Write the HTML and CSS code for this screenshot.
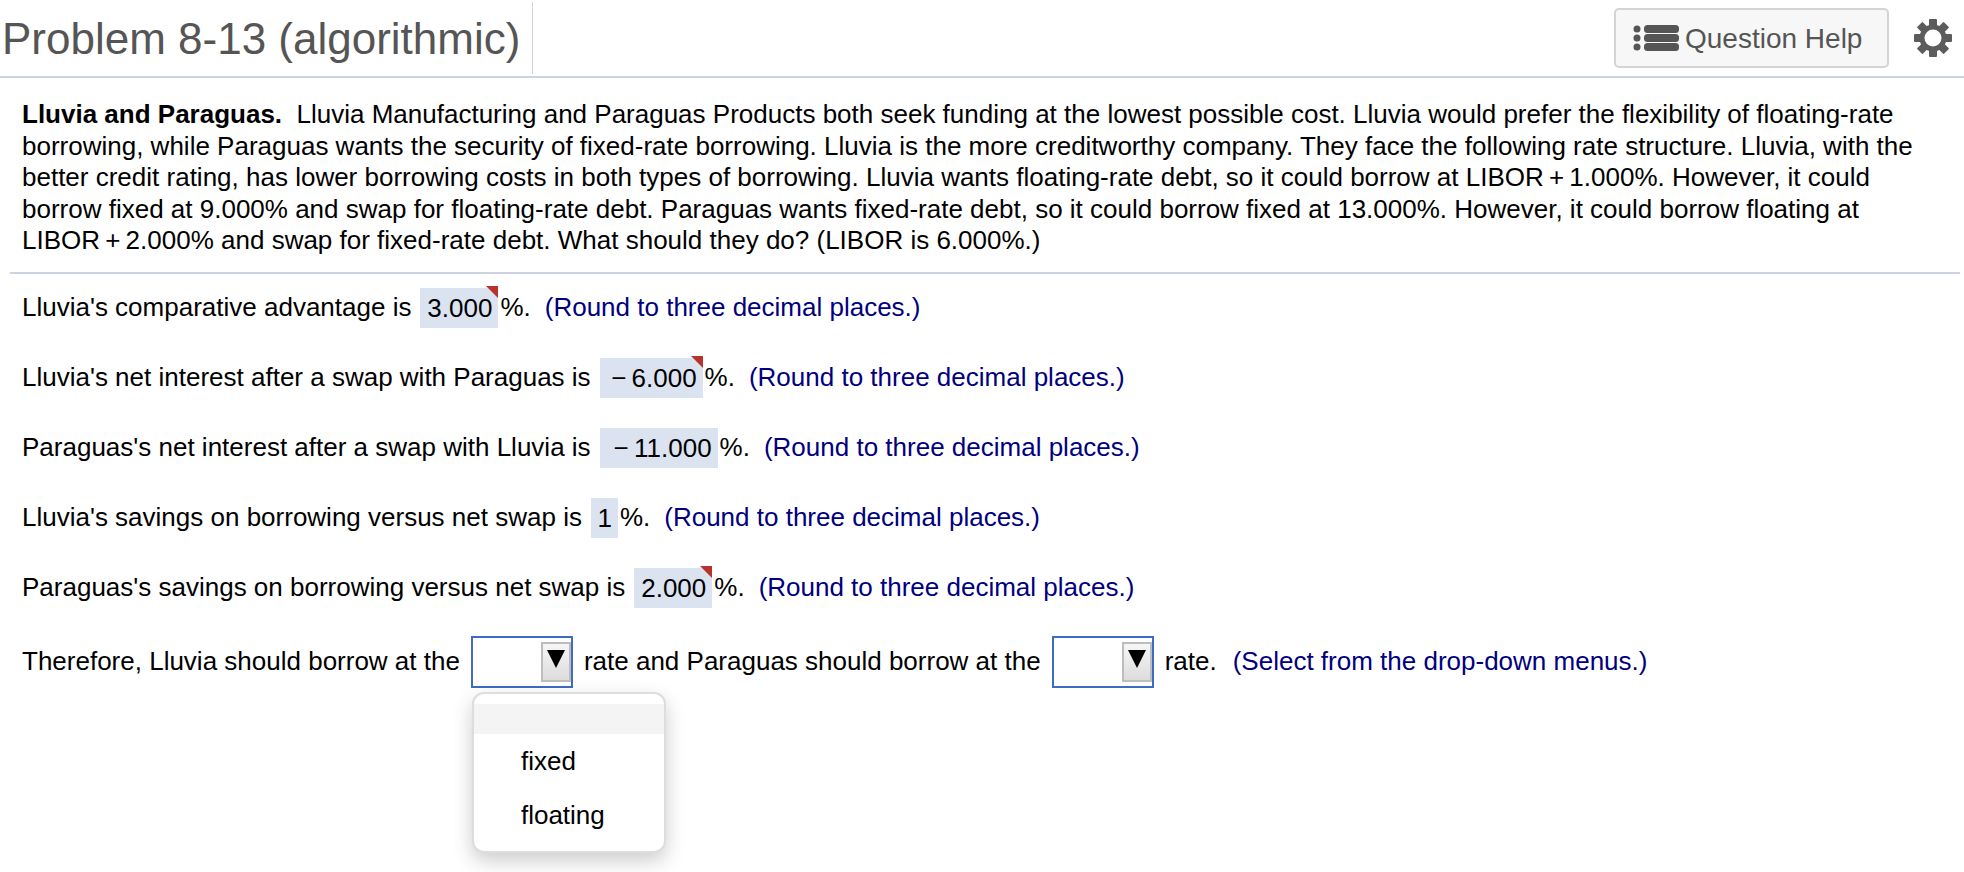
FILE: index.html
```html
<!DOCTYPE html>
<html lang="en">
<head>
    <meta charset="UTF-8">
    <meta name="viewport" content="width=device-width, initial-scale=1.0">
    <title>Problem 8-13 (algorithmic)</title>
    <link rel="stylesheet" href="styles.css">
</head>
<body>
    <div class="header">
        <h1 class="title">Problem 8-13 (algorithmic)</h1>
        <button class="btn-help">
            <svg class="icon-list" viewBox="0 0 46 26" width="46" height="26">
                <circle cx="4" cy="4" r="3.500"/>
                <circle cx="4" cy="13" r="3.500"/>
                <circle cx="4" cy="22" r="3.500"/>
                <rect x="11" y="0" width="35" height="8" rx="3.500"/>
                <rect x="11" y="9" width="35" height="8" rx="3.500"/>
                <rect x="11" y="18" width="35" height="8" rx="3.500"/>
            </svg>
            <span class="btn-label">Question Help</span>
        </button>
        <svg class="icon-gear" viewBox="0 0 40 40" width="40" height="40">
            <g fill="#5c5c5c">
                <rect x="16" y="1" width="8" height="38" rx="1"/>
                <rect x="16" y="1" width="8" height="38" rx="1" transform="rotate(45 20 20)"/>
                <rect x="16" y="1" width="8" height="38" rx="1" transform="rotate(90 20 20)"/>
                <rect x="16" y="1" width="8" height="38" rx="1" transform="rotate(135 20 20)"/>
                <circle cx="20" cy="20" r="13.500"/>
            </g>
            <circle cx="20" cy="20" r="8.500" fill="#fff"/>
        </svg>
    </div>

    <div class="problem">
        <p class="statement"><b>Lluvia and Paraguas.</b>&nbsp; Lluvia Manufacturing and Paraguas Products both seek funding at the lowest possible cost. Lluvia would prefer the flexibility of floating-rate<br>borrowing, while Paraguas wants the security of fixed-rate borrowing. Lluvia is the more creditworthy company. They face the following rate structure. Lluvia, with the<br>better credit rating, has lower borrowing costs in both types of borrowing. Lluvia wants floating-rate debt, so it could borrow at LIBOR&#8201;+&#8201;1.000%. However, it could<br>borrow fixed at 9.000% and swap for floating-rate debt. Paraguas wants fixed-rate debt, so it could borrow fixed at 13.000%. However, it could borrow floating at<br>LIBOR&#8201;+&#8201;2.000% and swap for fixed-rate debt. What should they do? (LIBOR is 6.000%.)</p>
    </div>

    <div class="answers">
        <div class="row">
            <span>Lluvia's comparative advantage is</span>
            <span class="answer wrong w-78">3.000</span>
            <span class="percent">%.</span>
            <span class="hint">(Round to three decimal places.)</span>
        </div>
        <div class="row">
            <span>Lluvia's net interest after a swap with Paraguas is</span>
            <span class="answer wrong w-103">&minus;&#8201;6.000</span>
            <span class="percent">%.</span>
            <span class="hint">(Round to three decimal places.)</span>
        </div>
        <div class="row">
            <span>Paraguas's net interest after a swap with Lluvia is</span>
            <span class="answer w-118">&minus;&#8201;11.000</span>
            <span class="percent">%.</span>
            <span class="hint">(Round to three decimal places.)</span>
        </div>
        <div class="row">
            <span>Lluvia's savings on borrowing versus net swap is</span>
            <span class="answer w-27">1</span>
            <span class="percent">%.</span>
            <span class="hint">(Round to three decimal places.)</span>
        </div>
        <div class="row">
            <span>Paraguas's savings on borrowing versus net swap is</span>
            <span class="answer wrong w-78">2.000</span>
            <span class="percent">%.</span>
            <span class="hint">(Round to three decimal places.)</span>
        </div>
        <div class="row row-select">
            <span>Therefore, Lluvia should borrow at the</span>
            <div class="dropdown">
                <span class="arrow-btn"><span class="arrow"></span></span>
                <ul class="menu">
                    <li class="blank"></li>
                    <li>fixed</li>
                    <li>floating</li>
                </ul>
            </div>
            <span>rate and Paraguas should borrow at the</span>
            <div class="dropdown">
                <span class="arrow-btn"><span class="arrow"></span></span>
            </div>
            <span>rate.</span>
            <span class="hint">(Select from the drop-down menus.)</span>
        </div>
    </div>
</body>
</html>
```

FILE: styles.css
```css
body {
    font-family: "Liberation Sans", Arial, sans-serif;
    font-size: 26px;
    color: #000;
    background-color: #fff;
    margin: 0;
    padding: 0;
    height: 872px;
    overflow: hidden;
}

.header {
    display: flex;
    align-items: center;
    height: 76px;
    border-bottom: 2px solid #cdd3e0;
}

.title {
    font-size: 44px;
    font-weight: normal;
    color: #555;
    margin: 0;
    padding-left: 2px;
    width: 533px;
    height: 72px;
    line-height: 74px;
    box-sizing: border-box;
    border-right: 1px solid #cdd3e0;
    white-space: nowrap;
}

.btn-help {
    display: flex;
    align-items: center;
    gap: 6px;
    margin-left: auto;
    width: 275px;
    height: 60px;
    padding: 0 0 0 17px;
    font-family: inherit;
    font-size: 28px;
    color: #555;
    background: #f7f7f7;
    border: 2px solid #d4d4d4;
    border-radius: 5px;
}

.btn-label {
    padding-top: 2px;
}

.icon-list {
    fill: #555;
}

.icon-gear {
    margin: 0 11px 0 24px;
}

.problem {
    padding: 21px 0 15px 22px;
}

.statement {
    margin: 0;
    line-height: 31.6px;
    white-space: nowrap;
}

.answers {
    margin-left: 10px;
    margin-right: 4px;
    padding: 14px 0 0 12px;
    border-top: 2px solid #cdd3e0;
}

.row {
    display: flex;
    align-items: center;
    height: 40px;
    margin-bottom: 30px;
    white-space: nowrap;
}

.row-select {
    height: 52px;
    margin-top: -2px;
}

.answer {
    position: relative;
    height: 40px;
    line-height: 40px;
    margin-left: 9px;
    box-sizing: border-box;
    padding-right: 6px;
    text-align: right;
    background-color: #dce3f0;
}

.w-78 { width: 78px; }
.w-103 { width: 103px; }
.w-118 { width: 118px; }
.w-27 { width: 27px; }

.wrong::after {
    content: "";
    position: absolute;
    top: -2px;
    right: 0;
    border-top: 12px solid #b8332c;
    border-left: 12px solid transparent;
}

.percent {
    margin-left: 2px;
}

.hint {
    color: #00007f;
    margin-left: 14px;
}

.row-select .hint {
    margin-left: 16px;
}

.dropdown {
    position: relative;
    display: flex;
    justify-content: flex-end;
    align-items: center;
    width: 102px;
    height: 52px;
    box-sizing: border-box;
    margin: 0 11px;
    border: 2px solid #3f6bc4;
    background: #fff;
}

.arrow-btn {
    display: flex;
    justify-content: center;
    align-items: flex-start;
    width: 30px;
    height: 40px;
    box-sizing: border-box;
    padding-top: 6px;
    border: 2px solid #bdbdbd;
    background: linear-gradient(#f6f6f6, #dcdcdc);
}

.arrow {
    border-top: 18px solid #000;
    border-left: 9px solid transparent;
    border-right: 9px solid transparent;
}

.menu {
    position: absolute;
    top: 54px;
    left: -1px;
    width: 194px;
    height: 161px;
    box-sizing: border-box;
    list-style: none;
    margin: 0;
    padding: 10px 0 0;
    background: #fff;
    border: 2px solid #ddd;
    border-radius: 12px;
    box-shadow: 0 8px 20px rgba(0, 0, 0, 0.2);
}

.menu li {
    height: 54px;
    line-height: 54px;
    padding-left: 47px;
}

.menu .blank {
    height: 30px;
    background: #f4f4f4;
}
```
